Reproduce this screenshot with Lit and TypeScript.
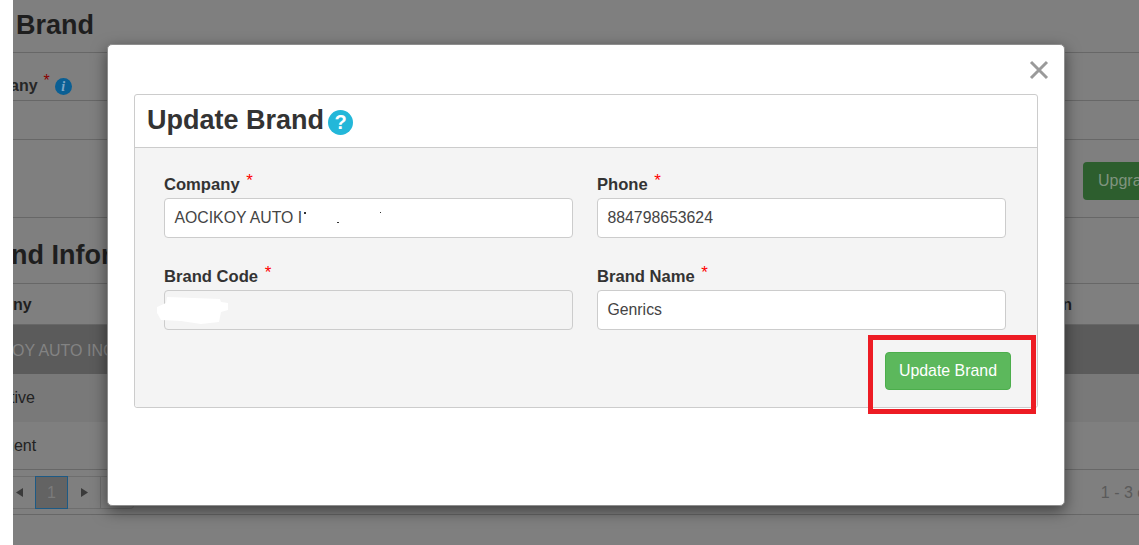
import { LitElement, html, css } from "lit";
import { customElement } from "lit/decorators.js";

@customElement("app-root")
export class AppRoot extends LitElement {
  static styles = css`
    :host { display: block; height: 545px; overflow: hidden; background: #fff; font-family: "Liberation Sans", Arial, sans-serif; color: #333; }
    * { box-sizing: border-box; }
    .shell { display: flex; height: 545px; }
    .gutter { width: 13px; flex: none; background: #fff; }
    .main { flex: 1; position: relative; overflow: hidden; background: #7f7f7f; color: #1c1c1c; }

    .row { display: flex; align-items: center; border-bottom: 1px solid #676767; white-space: nowrap; overflow: hidden; }
    .r-title { height: 53px; padding-left: 3px; font-size: 27px; font-weight: 700; padding-bottom: 2px; color: #1e1e1e; }
    .r-company { height: 48px; font-size: 16px; font-weight: 700; color: #262626; padding-top: 18px; }
    .r-company .clip { margin-left: -3px; }
    .bg-star { color: #8a0000; font-size: 16px; margin-left: 6px; position: relative; top: -5px; font-weight: 400; }
    .info { width: 17px; height: 17px; border-radius: 50%; background: #0a5f94; color: #7fa6c4; font: italic 700 14px/17px "Liberation Serif", serif; text-align: center; margin-left: 5px; margin-top: 1px; }
    .r-blank { height: 39px; }
    .r-upgrade { height: 78px; justify-content: flex-end; padding-top: 5px; }
    .upgrade { width: 70px; height: 38px; margin-right: -14px; background: #2d5e2e; border-radius: 4px; color: #80947f; font-size: 16px; line-height: 38px; padding-left: 15px; overflow: hidden; flex: none; }
    .r-section { height: 66px; font-size: 27px; font-weight: 700; color: #1e1e1e; padding-top: 10px; }
    .r-section span { margin-left: -2px; }
    .r-head { height: 41px; justify-content: space-between; font-size: 16px; font-weight: 700; color: #1e1e1e; padding-top: 2px; }
    .r-head .h2 { margin-right: 67px; }
    .r-sel { height: 49px; background: #5b5b5b; color: #838383; font-size: 16px; border: 0; padding-top: 2px; }
    .r-sel span { margin-left: -1px; }
    .r-odd { height: 48px; background: #797979; font-size: 16px; color: #222; border-bottom: 0; }
    .r-odd span { margin-left: -3px; }
    .r-even { height: 48px; background: #7f7f7f; font-size: 16px; color: #222; }
    .r-even span { margin-left: -8px; }
    .r-pager { height: 45px; position: relative; padding-top: 1px; }
    .pager { display: flex; align-items: center; height: 33px; width: 121px; flex: none; border: solid #6e6e6e; border-width: 1px 1px 1px 0; border-radius: 0 4px 4px 0; }
    .arrow-prev { width: 22px; flex: none; display: flex; padding-left: 3px; }
    .pg { width: 33px; height: 33px; flex: none; background: #636363; border: 1px solid #1d5a85; color: #7b7b7b; font-size: 16px; line-height: 31px; text-align: center; }
    .pg-next { width: 33px; height: 31px; flex: none; border-right: 1px solid #6e6e6e; display: flex; align-items: center; justify-content: center; }
    .tri { width: 7px; height: 9px; display: block; }
    .count { margin-left: auto; margin-right: -25px; color: #5a5a5a; font-size: 16px; flex: none; }

    .modal { position: absolute; left: 94px; top: 44px; width: 958px; height: 462px; background: #fff; border: 1px solid #8e8e8e; border-radius: 5px; box-shadow: 0 5px 15px rgba(0,0,0,.5); padding: 49px 26px 0; }
    .close { position: absolute; left: 921px; top: 15px; width: 20px; height: 20px; display: block; }
    .panel { border: 1px solid #ccc; border-radius: 3px; height: 314px; display: flex; flex-direction: column; }
    .panel-head { height: 53px; flex: none; border-bottom: 1px solid #ccc; display: flex; align-items: center; padding: 0 0 2px 12px; gap: 4px; }
    h3 { margin: 0; font-size: 27px; font-weight: 700; color: #333; line-height: 30px; }
    .help { width: 25px; height: 25px; border-radius: 50%; background: #23b7d9; color: #fff; font-size: 20px; font-weight: 700; line-height: 25px; text-align: center; margin-top: 5px; }
    .panel-body { flex: 1; background: #f4f4f4; padding: 25px 26px 17px 29px; display: flex; flex-direction: column; border-radius: 0 0 3px 3px; }
    .grid { display: grid; grid-template-columns: 409px 409px; column-gap: 24px; row-gap: 27px; }
    .field { position: relative; }
    label { display: block; height: 25px; font-size: 16.6px; font-weight: 700; color: #333; line-height: 23px; white-space: nowrap; }
    label b { color: #f00; font-weight: 400; font-size: 17px; position: relative; top: -4px; margin-left: 2px; }
    .input { height: 40px; border: 1px solid #ccc; border-radius: 4px; background: #fff; font-size: 15.8px; line-height: 38px; padding: 0 10px 0 9.5px; color: #444; }
    .input.disabled { background: #f4f4f4; }
    .blot { position: absolute; left: -8px; top: 30px; width: 74px; height: 30px; overflow: visible; }
    .speck { position: absolute; width: 2px; height: 1px; background: #333; }
    .s1 { left: 173px; top: 49px; }
    .s2 { left: 216px; top: 39px; width: 1px; }
    .s3 { left: 140px; top: 39px; width: 2px; height: 2px; }
    .actions { display: flex; justify-content: flex-end; margin-top: 22px; }
    button { width: 126px; height: 38px; border: 1px solid #4cae4c; border-radius: 4px; background: #5cb85c; color: #fff; font: 15.9px "Liberation Sans", Arial, sans-serif; padding: 0; }
    .callout { position: absolute; left: 855px; top: 335px; width: 168px; height: 79px; border: 5px solid #ed1c24; }
  `;

  render() {
    return html`
      <div class="shell">
        <div class="gutter"></div>
        <div class="main">
          <div class="row r-title"><span>Brand</span></div>
          <div class="row r-company"><span class="clip">any</span><span class="bg-star">*</span><span class="info">i</span></div>
          <div class="row r-blank"></div>
          <div class="row r-upgrade"><div class="upgrade">Upgrade</div></div>
          <div class="row r-section"><span>nd Information</span></div>
          <div class="row r-head"><span>ny</span><span class="h2">n</span></div>
          <div class="row r-sel"><span>OY AUTO INC</span></div>
          <div class="row r-odd"><span>tive</span></div>
          <div class="row r-even"><span>uent</span></div>
          <div class="row r-pager">
            <div class="pager">
              <span class="arrow-prev"><svg class="tri" viewBox="0 0 7 9"><path d="M7 0 V9 L0 4.5 Z" fill="#3a3a3a" /></svg></span>
              <span class="pg">1</span>
              <span class="pg-next"><svg class="tri" viewBox="0 0 7 9"><path d="M0 0 V9 L7 4.5 Z" fill="#3a3a3a" /></svg></span>
            </div>
            <span class="count">1 - 3 of 3</span>
          </div>

          <div class="modal">
            <svg class="close" viewBox="0 0 20 20" aria-label="Close">
              <path d="M2 2 L18 18 M18 2 L2 18" stroke="#9a9a9a" stroke-width="3" fill="none" />
            </svg>
            <div class="panel">
              <div class="panel-head"><h3>Update Brand</h3><span class="help">?</span></div>
              <div class="panel-body">
                <div class="grid">
                  <div class="field">
                    <label>Company <b>*</b></label>
                    <div class="input">AOCIKOY AUTO I</div>
                    <span class="speck s3"></span><span class="speck s1"></span><span class="speck s2"></span>
                  </div>
                  <div class="field">
                    <label>Phone <b>*</b></label>
                    <div class="input">884798653624</div>
                  </div>
                  <div class="field">
                    <label>Brand Code <b>*</b></label>
                    <div class="input disabled"></div>
                    <svg class="blot" viewBox="0 0 74 30"><path d="M11 2 L64 4 L65 7 L72 8 L72 15 L65 17 L63 27 L45 29 L25 26 L5 25 L1 18 L1 12 L10 8 Z" fill="#fff" /></svg>
                  </div>
                  <div class="field">
                    <label>Brand Name <b>*</b></label>
                    <div class="input">Genrics</div>
                  </div>
                </div>
                <div class="actions"><button>Update Brand</button></div>
              </div>
            </div>
          </div>
          <div class="callout"></div>
        </div>
      </div>
    `;
  }
}
